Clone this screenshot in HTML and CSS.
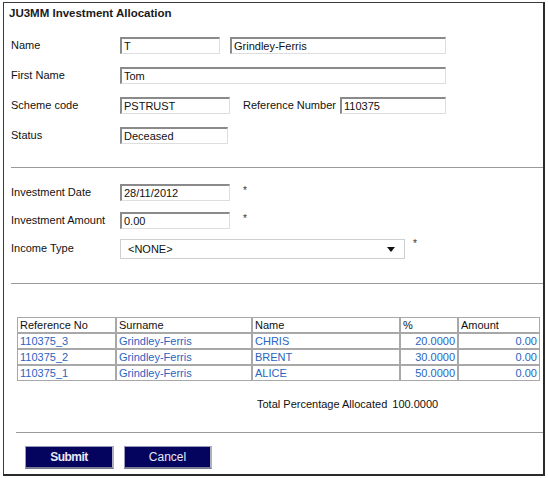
FILE: index.html
```html
<!DOCTYPE html>
<html>
<head>
<meta charset="utf-8">
<link rel="stylesheet" href="styles.css">
</head>
<body>
<div class="panel">
  <div class="title">JU3MM Investment Allocation</div>

  <div class="section top">
    <div class="row r30">
      <span class="label">Name</span>
      <input class="field w100" value="T">
      <input class="field w216 ml10" value="Grindley-Ferris">
    </div>
    <div class="row r30">
      <span class="label">First Name</span>
      <input class="field w326" value="Tom">
    </div>
    <div class="row r30">
      <span class="label">Scheme code</span>
      <input class="field w110" value="PSTRUST">
      <span class="inline-label">Reference Number</span>
      <input class="field w106" value="110375">
    </div>
    <div class="row r30">
      <span class="label">Status</span>
      <input class="field w108" value="Deceased">
    </div>
  </div>

  <div class="rule rule1"></div>

  <div class="section mid">
    <div class="row r28">
      <span class="label">Investment Date</span>
      <input class="field w110" value="28/11/2012">
      <span class="req">*</span>
    </div>
    <div class="row r28">
      <span class="label">Investment Amount</span>
      <input class="field w110" value="0.00">
      <span class="req">*</span>
    </div>
    <div class="row r28">
      <span class="label">Income Type</span>
      <div class="select">
        <span class="select-text">&lt;NONE&gt;</span>
        <span class="arrow"></span>
      </div>
      <span class="req req-sel">*</span>
    </div>
  </div>

  <div class="rule rule2"></div>

  <table class="grid">
    <colgroup>
      <col class="c1"><col class="c2"><col class="c3"><col class="c4"><col class="c5">
    </colgroup>
    <thead>
      <tr><th>Reference No</th><th>Surname</th><th>Name</th><th>%</th><th>Amount</th></tr>
    </thead>
    <tbody>
      <tr><td>110375_3</td><td>Grindley-Ferris</td><td>CHRIS</td><td class="num">20.0000</td><td class="num">0.00</td></tr>
      <tr><td>110375_2</td><td>Grindley-Ferris</td><td>BRENT</td><td class="num">30.0000</td><td class="num">0.00</td></tr>
      <tr><td>110375_1</td><td>Grindley-Ferris</td><td>ALICE</td><td class="num">50.0000</td><td class="num">0.00</td></tr>
    </tbody>
  </table>

  <div class="total">
    <span class="total-label">Total Percentage Allocated</span>
    <span class="total-value">100.0000</span>
  </div>

  <div class="rule rule3"></div>

  <div class="buttons">
    <button class="btn btn-submit">Submit</button>
    <button class="btn btn-cancel">Cancel</button>
  </div>
</div>
</body>
</html>
```

FILE: styles.css
```css
html, body {
  margin: 0;
  padding: 0;
  background: #ffffff;
}

body {
  font-family: "Liberation Sans", Arial, sans-serif;
  font-size: 11px;
  color: #111111;
}

.panel {
  box-sizing: border-box;
  margin: 2px 0 0 3px;
  width: 542px;
  height: 474px;
  border-top: 1px solid #3a3a3a;
  border-left: 1px solid #3a3a3a;
  border-right: 2px solid #2a2a2a;
  border-bottom: 2px solid #2a2a2a;
}

.title {
  height: 20px;
  line-height: 20px;
  padding-left: 5px;
  font-weight: bold;
  font-size: 11.5px;
  color: #1a1a1a;
}

.section {
  padding-left: 7px;
}

.section.top {
  margin-top: 7px;
}

.section.mid {
  margin-top: 10px;
}

.row {
  display: flex;
  align-items: center;
}

.r30 { height: 30px; }
.r28 { height: 28px; }

.label {
  width: 109px;
  flex: none;
}

.field {
  box-sizing: border-box;
  height: 17px;
  margin: 0;
  padding: 1px 2px 0 2px;
  font-family: "Liberation Sans", Arial, sans-serif;
  font-size: 11px;
  color: #111111;
  background: #ffffff;
  border-style: solid;
  border-width: 2px 1px 1px 2px;
  border-color: #8a8a8a #dedede #dedede #8a8a8a;
  outline: none;
}

.w100 { width: 100px; }
.w106 { width: 106px; }
.w108 { width: 108px; }
.w110 { width: 110px; }
.w216 { width: 216px; }
.w326 { width: 326px; }
.ml10 { margin-left: 10px; }

.inline-label {
  margin-left: 13px;
  width: 97px;
  flex: none;
}

.req {
  margin-left: 13px;
  align-self: flex-start;
  margin-top: 7px;
  font-size: 10px;
  color: #333333;
}

.req-sel {
  margin-left: 8px;
  margin-top: 4px;
}

.select {
  box-sizing: border-box;
  width: 285px;
  height: 20px;
  margin-top: 1px;
  border: 1px solid #cfcfcf;
  display: flex;
  align-items: center;
  justify-content: space-between;
  padding: 0 9px 0 7px;
}

.arrow {
  width: 0;
  height: 0;
  border-left: 4px solid transparent;
  border-right: 4px solid transparent;
  border-top: 5px solid #111111;
  margin-top: 2px;
}

.rule {
  height: 1px;
  background: #9a9a9a;
}

.rule1 {
  margin: 17px 0 0 7px;
}

.rule2 {
  margin: 21px 0 0 7px;
}

.rule3 {
  margin: 19px 0 0 12px;
}

.grid {
  margin: 33px 0 0 13px;
  width: 523px;
  table-layout: fixed;
  border-collapse: separate;
  border-spacing: 0;
}

.c1 { width: 99px; }
.c2 { width: 136px; }
.c3 { width: 148px; }
.c4 { width: 58px; }
.c5 { width: 82px; }

.grid th,
.grid td {
  box-sizing: border-box;
  height: 16px;
  padding: 0 2px;
  border: 1px solid #a8a8a8;
  font-size: 11px;
  font-weight: normal;
  text-align: left;
  white-space: nowrap;
  line-height: 14px;
}

.grid th {
  color: #111111;
}

.grid td {
  color: #2a64c0;
}

.grid td.num {
  text-align: right;
}

.total {
  display: flex;
  margin-top: 14px;
  height: 18px;
  align-items: center;
}

.total-label {
  margin-left: 253px;
  flex: none;
}

.total-value {
  margin-left: 5px;
}

.buttons {
  display: flex;
  gap: 10px;
  margin: 13px 0 0 21px;
}

.btn {
  box-sizing: border-box;
  height: 23px;
  padding: 0;
  font-family: "Liberation Sans", Arial, sans-serif;
  font-size: 12px;
  color: #e8e8f8;
  background: #04045e;
  border-style: solid;
  border-width: 1px 2px 2px 1px;
  border-color: #9a9ab8 #b0b0c0 #7c7c90 #9a9ab8;
}

.btn-submit {
  width: 89px;
  font-weight: bold;
  letter-spacing: -0.5px;
}

.btn-cancel {
  width: 88px;
}
```
